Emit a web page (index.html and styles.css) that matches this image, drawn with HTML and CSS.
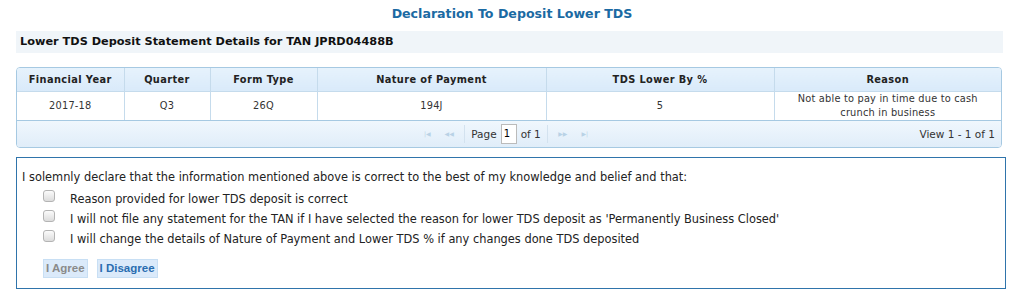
FILE: index.html
```html
<!DOCTYPE html>
<html lang="en">
<head>
    <meta charset="UTF-8">
    <title>Declaration To Deposit Lower TDS</title>
    <link rel="stylesheet" href="styles.css">
</head>
<body>

<div class="page_title">Declaration To Deposit Lower TDS</div>

<div class="sub_head">Lower TDS Deposit Statement Details for TAN JPRD04488B</div>

<!--grid with pager-->
<div class="grid">
    <table class="grid_table">
        <tr class="grid_head">
            <th class="c1">Financial Year</th>
            <th class="c2">Quarter</th>
            <th class="c3">Form Type</th>
            <th class="c4">Nature of Payment</th>
            <th class="c5">TDS Lower By %</th>
            <th class="c6">Reason</th>
        </tr>
        <tr class="grid_row">
            <td>2017-18</td>
            <td>Q3</td>
            <td>26Q</td>
            <td>194J</td>
            <td>5</td>
            <td>Not able to pay in time due to cash crunch in business</td>
        </tr>
    </table>
    <div class="pager">
        <div class="pager_side"></div>
        <div class="pager_center">
            <span class="pg_btn">|&#9664;</span>
            <span class="pg_btn">&#9664;&#9664;</span>
            <span class="pg_sep"></span>
            <span>Page</span>
            <input type="text" class="pg_input" value="1">
            <span>of 1</span>
            <span class="pg_sep"></span>
            <span class="pg_btn">&#9654;&#9654;</span>
            <span class="pg_btn">&#9654;|</span>
        </div>
        <div class="pager_side pager_info">View 1 - 1 of 1</div>
    </div>
</div>

<div class="decl">
    <p class="decl_text">I solemnly declare that the information mentioned above is correct to the best of my knowledge and belief and that:</p>
    <ul class="decl_list">
        <li><input type="checkbox" id="chk1"><label for="chk1">Reason provided for lower TDS deposit is correct</label></li>
        <li><input type="checkbox" id="chk2"><label for="chk2">I will not file any statement for the TAN if I have selected the reason for lower TDS deposit as 'Permanently Business Closed'</label></li>
        <li><input type="checkbox" id="chk3"><label for="chk3">I will change the details of Nature of Payment and Lower TDS % if any changes done TDS deposited</label></li>
    </ul>
    <div class="decl_btns">
        <button class="btn btn_off" disabled>I Agree</button>
        <button class="btn">I Disagree</button>
    </div>
</div>

</body>
</html>
```

FILE: styles.css
```css
*{
    margin: 0px;
    padding: 0px;
    box-sizing: border-box;
}
body{
    background-color: white;
    font-family: "DejaVu Sans", Verdana, sans-serif;
    color: #222222;
}

.page_title{
    height: 31px;
    padding-top: 6px;
    text-align: center;
    color: #1b6aa3;
    font-size: 12.6px;
    font-weight: bold;
}

.sub_head{
    margin: 0px 21px 0px 16px;
    height: 22px;
    padding: 4px 0px 0px 4px;
    background-color: #f0f5f9;
    font-size: 11.3px;
    font-weight: bold;
    color: #111111;
}

/*grid*/
.grid{
    margin: 14px 22px 0px 16px;
    border: 1px solid #a6c9e2;
    border-radius: 4px;
    overflow: hidden;
}
.grid_table{
    width: 100%;
    border-collapse: collapse;
    table-layout: fixed;
}
.grid_head th{
    height: 23px;
    background: linear-gradient(#e6f2fc, #d9eafa);
    border-right: 1px solid #c5dbec;
    border-bottom: 1px solid #c5dbec;
    font-size: 9.8px;
    font-weight: bold;
    letter-spacing: 0.4px;
    color: #222222;
}
.grid_row td{
    height: 29px;
    text-align: center;
    border-right: 1px solid #c5dbec;
    border-bottom: 1px solid #a6c9e2;
    font-size: 9.8px;
    color: #333333;
    line-height: 14px;
    padding: 0px 12px;
    letter-spacing: 0.2px;
}
.grid_table th:last-child, .grid_table td:last-child{
    border-right: none;
}
.c1{ width: 107px; }
.c2{ width: 86px; }
.c3{ width: 107px; }
.c4{ width: 229px; }
.c5{ width: 228px; }

.pager{
    height: 26px;
    display: flex;
    align-items: center;
    background: linear-gradient(#f0f7fd, #e0edf9);
    font-size: 10.5px;
    color: #333333;
}
.pager_side{
    flex: 1;
}
.pager_info{
    text-align: right;
    padding-right: 6px;
}
.pager_center{
    display: flex;
    align-items: center;
    gap: 4px;
}
.pg_btn{
    font-size: 6px;
    color: #b9d2e6;
    width: 18px;
    text-align: center;
}
.pg_sep{
    width: 1px;
    height: 18px;
    background-color: #d3e2ef;
    margin: 0px 2px;
}
.pg_input{
    width: 16px;
    height: 20px;
    border: 1px solid #bbbbbb;
    font-size: 10px;
    font-family: "DejaVu Sans", sans-serif;
    padding-left: 2px;
}

/*declaration*/
.decl{
    margin: 9px 18px 0px 16px;
    height: 132px;
    border: 1px solid #2f74ab;
    padding: 12px 0px 0px 5px;
    font-size: 11.4px;
    color: #222222;
}
.decl_text{
    height: 19px;
}
.decl_list{
    list-style: none;
    padding-left: 21px;
}
.decl_list li{
    height: 20px;
    display: flex;
    align-items: center;
}
.decl_list input{
    appearance: none;
    width: 12px;
    height: 12px;
    margin-right: 15px;
    margin-top: -5px;
    border: 1px solid #b4b4b4;
    border-radius: 3px;
    background: linear-gradient(#fbfbfb, #dcdcdc);
}
.decl_btns{
    margin-top: 10px;
    padding-left: 21px;
    display: flex;
    gap: 9px;
}
.btn{
    height: 19px;
    padding: 0px 2px;
    background-color: #dbeafa;
    border: 1px solid #c8dff4;
    font-family: "Liberation Sans", Arial, sans-serif;
    font-size: 11.5px;
    font-weight: bold;
    color: #2a6db0;
}
.btn_off{
    color: #8a8a8a;
}
```
